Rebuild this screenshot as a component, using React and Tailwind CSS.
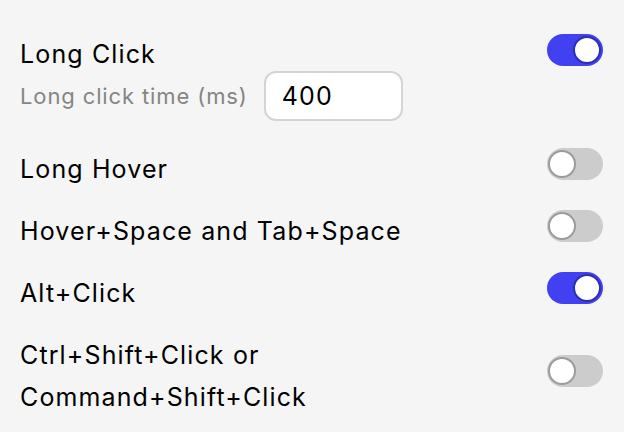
import React, { useState } from 'react';

const font = { fontFamily: 'Inter, "Liberation Sans", sans-serif' };

function Toggle({ on, onChange, className = 'mb-2' }) {
  return (
    <button
      onClick={onChange}
      className={`relative w-14 h-8 shrink-0 rounded-full ${className} ${on ? 'bg-[#4141f2]' : 'bg-[#cccccc]'}`}
    >
      <span
        className={`absolute top-[2px] w-7 h-7 rounded-full bg-white border-2 ${
          on ? 'left-[26px] border-[#2d2db8]' : 'left-[1px] border-[#9b9b9b]'
        }`}
      />
    </button>
  );
}

function Row({ label, on, onChange }) {
  return (
    <div className="flex items-center justify-between gap-6">
      <span className="text-[25px] tracking-[0.045em] leading-[42px] text-black">{label}</span>
      <Toggle on={on} onChange={onChange} className="mb-[10px]" />
    </div>
  );
}

export default function App() {
  const [settings, setSettings] = useState({
    longClick: true,
    longHover: false,
    hoverSpace: false,
    altClick: true,
    ctrlShift: false,
  });
  const [time, setTime] = useState('400');

  const flip = key => () => setSettings(s => ({ ...s, [key]: !s[key] }));

  return (
    <div style={font} className="w-[624px] h-[432px] bg-[#f5f5f5] pl-5 pr-[21px] pt-[38px] overflow-hidden">
      <div className="flex items-center justify-between h-8">
        <span className="text-[25px] tracking-[0.045em] leading-8 text-black">Long Click</span>
        <Toggle on={settings.longClick} onChange={flip('longClick')} />
      </div>
      <div className="flex items-center gap-4 mt-px">
        <span className="text-[22px] tracking-[0.04em] text-[#858585]">Long click time (ms)</span>
        <input
          value={time}
          onChange={e => setTime(e.target.value)}
          className="w-[139px] h-[50px] rounded-xl border-2 border-[#d4d4d4] bg-white pl-4 text-[25px] tracking-[0.045em] text-black outline-none"
          style={font}
        />
      </div>

      <div className="flex flex-col gap-5 mt-[27px]">
        <Row label="Long Hover" on={settings.longHover} onChange={flip('longHover')} />
        <Row label="Hover+Space and Tab+Space" on={settings.hoverSpace} onChange={flip('hoverSpace')} />
        <Row label="Alt+Click" on={settings.altClick} onChange={flip('altClick')} />
        <Row label="Ctrl+Shift+Click or Command+Shift+Click" on={settings.ctrlShift} onChange={flip('ctrlShift')} />
      </div>
    </div>
  );
}
